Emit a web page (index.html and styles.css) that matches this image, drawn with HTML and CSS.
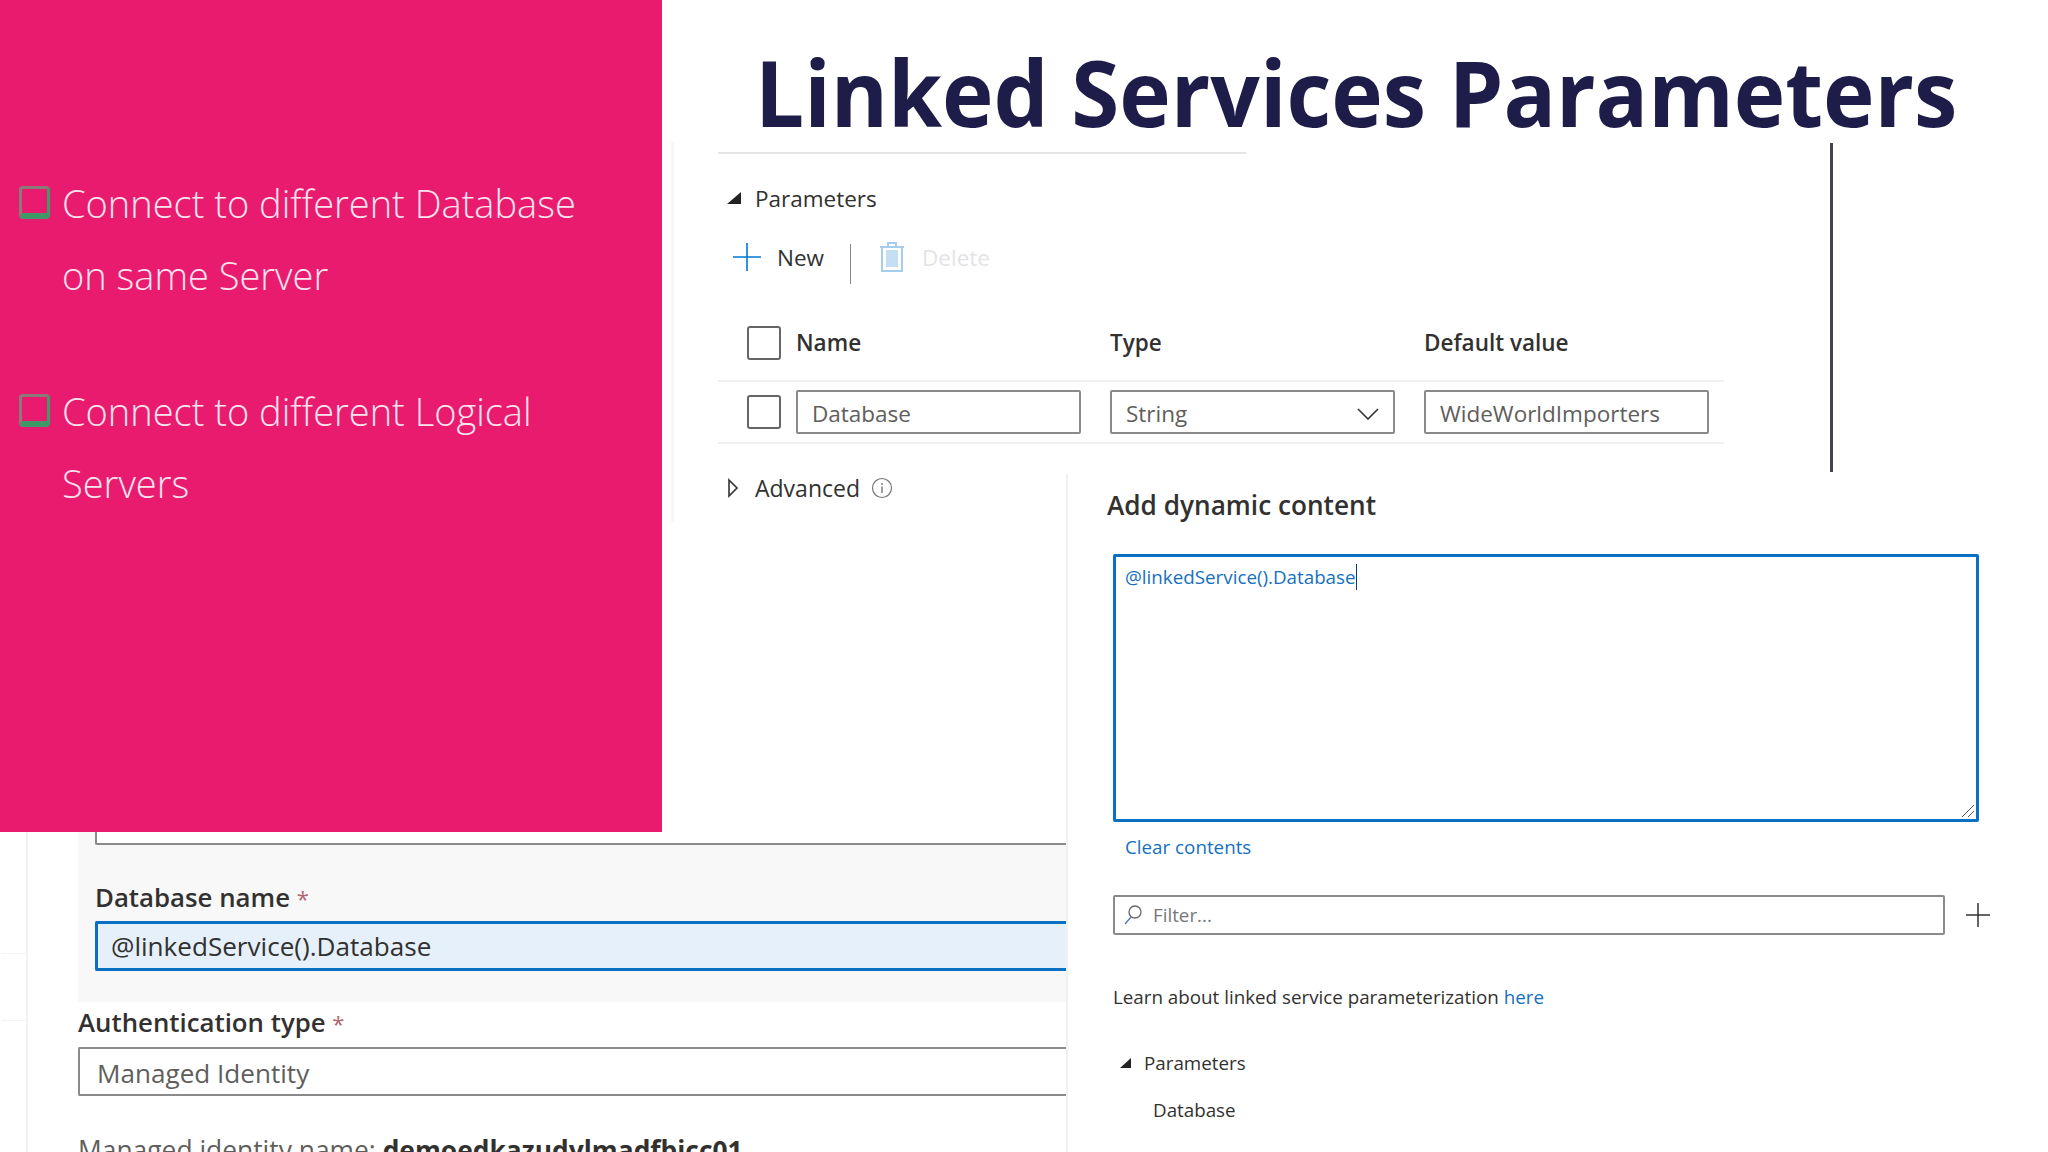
FILE: index.html
```html
<!DOCTYPE html>
<html>
<head>
  <meta charset="utf-8">
  <link rel="stylesheet" href="styles.css">
</head>
<body>
  <div class="slide">
    <!-- screenshot behind the pink panel -->
    <div class="shot-form">
      <div class="form-group">
        <div class="input input-top"></div>
        <div class="label">Database name <span class="req">*</span></div>
        <div class="input input-active">@linkedService().Database</div>
      </div>
      <div class="label label-auth">Authentication type <span class="req">*</span></div>
      <div class="input input-auth">Managed Identity</div>
      <div class="identity">Managed identity name: <strong>demoedkazudylmadfbicc01</strong></div>
    </div>

    <div class="side">
      <ul class="bullets">
        <li>Connect to different Database on same Server</li>
        <li>Connect to different Logical Servers</li>
      </ul>
    </div>

    <h1 class="title">Linked Services Parameters</h1>

    <div class="shot-params">
      <div class="params-head">
        <svg width="16" height="14" viewBox="0 0 16 14"><path d="M15 1v12H1z" fill="#222"/></svg>
        <span>Parameters</span>
      </div>
      <div class="toolbar">
        <svg width="30" height="30" viewBox="0 0 30 30"><path d="M15 1v28M1 15h28" stroke="#0078d4" stroke-width="1.6" fill="none"/></svg>
        <span class="tool-new">New</span>
        <span class="tool-sep"></span>
        <svg width="26" height="32" viewBox="0 0 26 32"><path d="M1 6h24M9 6V2h8v4M3 6v24h20V6" stroke="#a6cdee" stroke-width="2" fill="none"/><path d="M7 9h12v17H7z" fill="#c4def4"/></svg>
        <span class="tool-delete">Delete</span>
      </div>
      <div class="grid-row grid-head">
        <span class="check"></span>
        <span>Name</span>
        <span>Type</span>
        <span>Default value</span>
      </div>
      <div class="grid-row grid-body">
        <span class="check"></span>
        <span class="cell">Database</span>
        <span class="cell cell-select">String
          <svg width="22" height="12" viewBox="0 0 22 12"><path d="M1 1l10 10L21 1" stroke="#333" stroke-width="1.6" fill="none"/></svg>
        </span>
        <span class="cell">WideWorldImporters</span>
      </div>
      <div class="advanced">
        <svg width="12" height="20" viewBox="0 0 12 20"><path d="M2 2l8 8-8 8z" stroke="#333" stroke-width="1.6" fill="#fff"/></svg>
        <span>Advanced</span>
        <svg class="info" width="22" height="22" viewBox="0 0 22 22"><circle cx="11" cy="11" r="9.5" stroke="#777" stroke-width="1.2" fill="none"/><path d="M11 9.5v6.5M11 6v2" stroke="#777" stroke-width="1.4"/></svg>
      </div>
    </div>

    <div class="vline"></div>

    <div class="shot-dynamic">
      <h2 class="dyn-title">Add dynamic content</h2>
      <div class="expr"><span class="expr-text">@linkedService().Database</span><span class="caret"></span>
        <svg class="grip" width="14" height="14" viewBox="0 0 14 14"><path d="M13 1L1 13M13 7l-6 6" stroke="#555" stroke-width="1" fill="none"/></svg>
      </div>
      <a class="clear">Clear contents</a>
      <div class="filter-row">
        <div class="filter">
          <svg width="20" height="22" viewBox="0 0 20 22"><circle cx="12" cy="8" r="6" stroke="#666" stroke-width="1.3" fill="none"/><path d="M8 13l-6 7" stroke="#5a6fc0" stroke-width="1.3"/></svg>
          <span>Filter...</span>
        </div>
        <svg width="26" height="26" viewBox="0 0 26 26"><path d="M13 1v24M1 13h24" stroke="#333" stroke-width="1.5" fill="none"/></svg>
      </div>
      <p class="learn">Learn about linked service parameterization <a>here</a></p>
      <div class="tree-head">
        <svg width="13" height="12" viewBox="0 0 13 12"><path d="M12 1v10H1z" fill="#222"/></svg>
        <span>Parameters</span>
      </div>
      <div class="tree-item">Database</div>
    </div>
  </div>
</body>
</html>
```

FILE: styles.css
```css
body {
  margin: 0;
  background: #fff;
  font-family: "Open Sans", "Noto Sans", sans-serif;
  color: #323130;
}

.slide {
  position: relative;
  width: 2048px;
  height: 1152px;
  overflow: hidden;
  background: #fff;
}

/* left pink panel */
.side {
  position: absolute;
  left: 0;
  top: 0;
  width: 662px;
  height: 832px;
  background: #e91b6f;
  padding-top: 167px;
  box-sizing: border-box;
}

.bullets {
  list-style: none;
  margin: 0;
  padding: 0 50px 0 62px;
  color: #fbe3ee;
  font-size: 38px;
  font-weight: 300;
  line-height: 72px;
}

.bullets li {
  position: relative;
  margin-bottom: 64px;
}

.bullets li::before {
  content: '';
  position: absolute;
  left: -43px;
  top: 19px;
  width: 25px;
  height: 24px;
  border: 3px solid #8a7a7c;
  border-bottom: 6px solid #3f9a68;
  border-right-color: #3f9a68;
  border-radius: 4px;
}

/* the slide was stretched tall in the recording */
.title {
  position: absolute;
  left: 755px;
  top: 32px;
  margin: 0;
  font-size: 92px;
  font-weight: 700;
  line-height: 120px;
  color: #1e1c48;
  white-space: nowrap;
  transform: scaleX(0.947);
  transform-origin: left center;
}

.vline {
  position: absolute;
  left: 1830px;
  top: 143px;
  width: 3px;
  height: 329px;
  background: #44444f;
}

/* parameters grid screenshot */
.shot-params {
  position: absolute;
  left: 718px;
  top: 152px;
  width: 1006px;
  font-size: 22.5px;
}

.shot-params::before {
  content: '';
  position: absolute;
  top: 0;
  left: 0;
  width: 528px;
  height: 2px;
  background: #e6e6e6;
}

.shot-params::after {
  content: '';
  position: absolute;
  top: -10px;
  left: -47px;
  width: 3px;
  height: 380px;
  background: #f6f6f6;
}

.params-head {
  display: flex;
  align-items: center;
  gap: 13px;
  margin: 31px 0 0 8px;
  height: 30px;
}

.toolbar {
  display: flex;
  align-items: center;
  margin: 24px 0 0 14px;
  height: 40px;
}

.tool-new {
  margin-left: 15px;
}

.tool-sep {
  width: 1px;
  height: 40px;
  background: #888;
  margin: 13px 28px 0 26px;
}

.tool-delete {
  margin-left: 17px;
  color: #e3e3e6;
}

.grid-row {
  display: grid;
  grid-template-columns: 78px 314px 314px 286px;
  align-items: center;
  border-bottom: 2px solid #f0f0f0;
}

.grid-head {
  box-sizing: border-box;
  margin-top: 33px;
  height: 72px;
  padding-bottom: 5px;
  font-weight: 600;
}

.grid-body {
  height: 60px;
}

.check {
  width: 30px;
  height: 30px;
  margin-left: 29px;
  border: 2px solid #666;
  border-radius: 3px;
}

.cell {
  display: flex;
  align-items: center;
  justify-content: space-between;
  box-sizing: border-box;
  width: 285px;
  height: 44px;
  padding: 3px 14px 0 14px;
  border: 2px solid #8a8a8a;
  border-radius: 2px;
  color: #605e5c;
}

.advanced {
  display: flex;
  align-items: center;
  margin: 29px 0 0 9px;
  gap: 16px;
  height: 30px;
  font-size: 23px;
}

.info {
  margin-left: -5px;
}

/* add dynamic content pane */
.shot-dynamic {
  position: absolute;
  left: 1066px;
  top: 474px;
  width: 982px;
  height: 678px;
  box-sizing: border-box;
  padding: 12px 0 0 39px;
  background: #fff;
  border-left: 2px solid #f0f0f0;
  font-size: 18.8px;
}

.dyn-title {
  margin: 0;
  font-size: 26.2px;
  line-height: 38px;
  font-weight: 600;
  color: #323130;
}

.expr {
  position: relative;
  box-sizing: border-box;
  width: 866px;
  height: 268px;
  margin: 30px 0 0 6px;
  padding: 7px 9px;
  border: 3px solid #0a70c4;
  border-radius: 2px;
  line-height: 26px;
}

.expr-text {
  color: #1670c0;
}

.caret {
  display: inline-block;
  width: 1.5px;
  height: 26px;
  background: #0a3a80;
  vertical-align: top;
}

.grip {
  position: absolute;
  right: 1px;
  bottom: 1px;
}

.clear {
  display: block;
  margin: 12px 0 0 18px;
  color: #1670c0;
  line-height: 26px;
}

.filter-row {
  display: flex;
  align-items: center;
  gap: 20px;
  margin: 35px 0 0 6px;
}

.filter {
  display: flex;
  align-items: center;
  gap: 10px;
  box-sizing: border-box;
  width: 832px;
  height: 40px;
  padding-left: 8px;
  border: 2px solid #8a8a8a;
  border-radius: 2px;
  color: #777;
}

.learn {
  margin: 49px 0 0 6px;
  line-height: 26px;
  color: #323130;
}

.learn a {
  color: #1670c0;
}

.tree-head {
  display: flex;
  align-items: center;
  gap: 12px;
  margin: 40px 0 0 12px;
  line-height: 26px;
}

.tree-item {
  margin: 21px 0 0 46px;
  line-height: 26px;
}

/* form screenshot under the panel */
.shot-form {
  position: absolute;
  left: 26px;
  top: 800px;
  width: 1042px;
  height: 352px;
  border-left: 2px solid #f2f2f2;
  font-size: 26.1px;
}

.shot-form::before {
  content: '';
  position: absolute;
  left: -26px;
  top: 153px;
  width: 26px;
  height: 66px;
  border-top: 1px solid #f4f4f4;
  border-bottom: 1px solid #f4f4f4;
}

.form-group {
  margin-left: 50px;
  height: 202px;
  background: #f8f8f9;
  padding-left: 17px;
}

.input {
  box-sizing: border-box;
  border: 2px solid #8a8a8a;
  border-radius: 2px;
  border-right: 0;
}

.input-top {
  height: 45px;
  background: #fff;
  border-top: 0;
}

.label {
  margin-top: 33px;
  line-height: 38px;
  font-size: 25.8px;
  font-weight: 600;
}

.req {
  color: #b0666a;
  font-size: 22px;
  font-weight: 400;
}

.input-active {
  height: 50px;
  margin-top: 4px;
  padding-left: 13px;
  line-height: 44px;
  background: #e5f0fa;
  border: 3px solid #0a70c4;
  border-right: 0;
}

.label-auth {
  margin: 1px 0 0 50px;
}

.input-auth {
  height: 49px;
  margin: 5px 0 0 50px;
  padding-left: 17px;
  line-height: 48px;
  color: #605e5c;
}

.identity {
  margin: 36px 0 0 50px;
  font-size: 26.4px;
  color: #605e5c;
  line-height: 36px;
  white-space: nowrap;
}

.identity strong {
  color: #323130;
}
```
